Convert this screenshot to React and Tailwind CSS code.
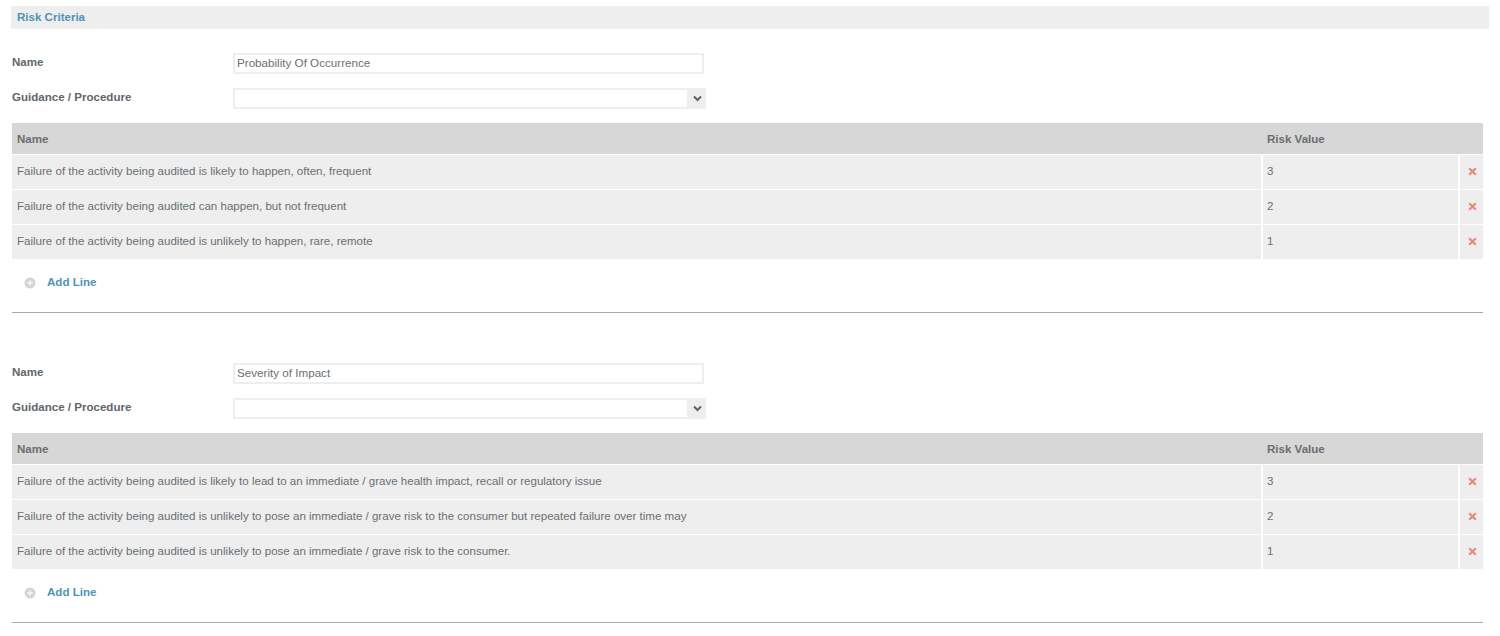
import React from "react";

function XIcon() {
  return (
    <svg width="9" height="9" viewBox="0 0 9 9" className="block">
      <path d="M1.2 1.2 L7.8 7.8 M7.8 1.2 L1.2 7.8" stroke="#e58a78" strokeWidth="2.2" fill="none" />
    </svg>
  );
}

function Chevron() {
  return (
    <svg width="9" height="7" viewBox="0 0 9 7" className="block">
      <path d="M1 1.5 L4.5 5 L8 1.5" stroke="#5f6368" strokeWidth="2" fill="none" />
    </svg>
  );
}

function PlusCircle() {
  return (
    <svg width="12" height="12" viewBox="0 0 12 12" className="block">
      <circle cx="6" cy="6" r="5.5" fill="#d4d4d4" />
      <path d="M6 3.2 V8.8 M3.2 6 H8.8" stroke="#f2f2f2" strokeWidth="1.8" />
    </svg>
  );
}

function Row({ name, value }) {
  return (
    <div className="flex h-[35px] gap-[2px] pb-px">
      <div className="flex w-[1249px] items-center bg-[#eeeeee] pl-[5px]">{name}</div>
      <div className="flex w-[195px] items-center bg-[#eeeeee] pl-[4px]">{value}</div>
      <div className="flex w-[23px] items-center justify-center bg-[#eeeeee] pb-[1px] pl-[2px]">
        <XIcon />
      </div>
    </div>
  );
}

function Criteria({ name, rows }) {
  return (
    <section className="ml-[12px] w-[1471px]">
      <div className="flex h-[21px] items-center">
        <label className="w-[221px] pb-[2px] font-bold text-[#62666a]">Name</label>
        <input
          readOnly
          value={name}
          className="h-[21px] w-[471px] border-2 border-[#eeeeee] bg-white pb-[2px] pl-[2px] text-[11.65px] text-[#6b6f73] outline-none"
        />
      </div>
      <div className="mt-[14px] flex h-[21px] items-center">
        <label className="w-[221px] pb-[1px] font-bold text-[#62666a]">Guidance / Procedure</label>
        <div className="h-[21px] w-[456px] border-2 border-[#eeeeee] bg-white" />
        <div className="flex h-[21px] w-[17px] items-center justify-center bg-[#eeeeee]">
          <Chevron />
        </div>
      </div>
      <div className="mt-[14px] mb-px flex h-[31px] items-center bg-[#d7d7d7] pt-[2px] font-bold text-[#6a6e72]">
        <div className="w-[1251px] pl-[5px]">Name</div>
        <div className="pl-[4px]">Risk Value</div>
      </div>
      {rows.map((r) => (
        <Row key={r[0]} name={r[0]} value={r[1]} />
      ))}
      <div className="mt-[12px] flex h-[22px] items-center pl-[12px]">
        <PlusCircle />
        <a className="ml-[11px] font-bold text-[#4f93b5]">Add Line</a>
      </div>
      <hr className="mt-[18px] border-0 border-t border-[#a8a8a8]" />
    </section>
  );
}

export default function App() {
  return (
    <div className="h-[636px] w-[1500px] overflow-hidden bg-white pt-[6px] font-['Liberation_Sans',Arial,sans-serif] text-[11.56px] text-[#6b6f73]">
      <div className="ml-[11px] flex h-[23px] w-[1478px] items-center bg-[#eeeeee] pl-[6px] font-bold text-[#4f93b5]">
        Risk Criteria
      </div>
      <div className="mt-[24px]">
        <Criteria
          name="Probability Of Occurrence"
          rows={[
            ["Failure of the activity being audited is likely to happen, often, frequent", "3"],
            ["Failure of the activity being audited can happen, but not frequent", "2"],
            ["Failure of the activity being audited is unlikely to happen, rare, remote", "1"],
          ]}
        />
      </div>
      <div className="mt-[50px]">
        <Criteria
          name="Severity of Impact"
          rows={[
            ["Failure of the activity being audited is likely to lead to an immediate / grave health impact, recall or regulatory issue", "3"],
            ["Failure of the activity being audited is unlikely to pose an immediate / grave risk to the consumer but repeated failure over time may", "2"],
            ["Failure of the activity being audited is unlikely to pose an immediate / grave risk to the consumer.", "1"],
          ]}
        />
      </div>
    </div>
  );
}
